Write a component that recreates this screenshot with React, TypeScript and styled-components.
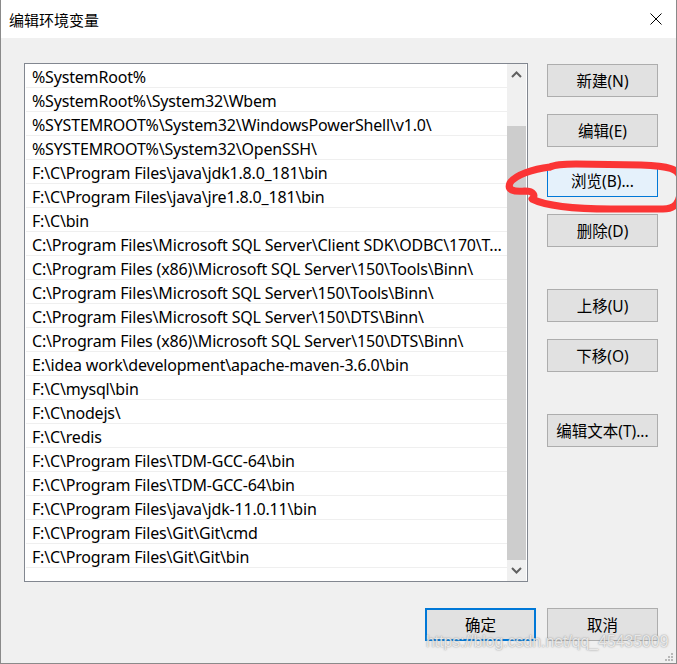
import React from "react";
import styled, { createGlobalStyle } from "styled-components";

const Global = createGlobalStyle`
  html, body { margin: 0; padding: 0; background: #f0f0f0; }
  * { box-sizing: border-box; }
  body { font-family: "Noto Sans", "Noto Sans CJK SC", sans-serif; }
`;

const Window = styled.div`
  position: relative;
  width: 677px;
  height: 664px;
  background: #f0f0f0;
  border: 1px solid #8a8a8a;
  border-top: none;
  display: flex;
  flex-direction: column;
  overflow: hidden;
`;

const TitleBar = styled.div`
  height: 38px;
  background: #ffffff;
  display: flex;
  align-items: center;
  justify-content: space-between;
  padding: 0 14px 0 8px;
  flex-shrink: 0;
`;

const Title = styled.div`
  font-family: "Noto Sans CJK SC", sans-serif;
  font-size: 15px;
  color: #000;
  line-height: 1;
  margin-top: 1px;
`;

const Body = styled.div`
  flex: 1;
  display: flex;
  flex-direction: column;
  padding: 25px 18px 0 23px;
`;

const Main = styled.div`
  display: flex;
  gap: 19px;
`;

const ListBox = styled.div`
  width: 504px;
  height: 519px;
  border: 1px solid #828790;
  background: #ffffff;
  display: flex;
  padding-right: 1px;
`;

const Rows = styled.div`
  flex: 1;
  display: flex;
  flex-direction: column;
  overflow: hidden;
`;

const Row = styled.div`
  height: 24px;
  flex-shrink: 0;
  border-bottom: 1px solid #efefef;
  margin-left: 1px;
  padding-left: 6px;
  padding-top: 2px;
  display: flex;
  align-items: center;
  font-size: 16px;
  color: #000;
  white-space: nowrap;
  overflow: hidden;
  letter-spacing: -0.18px;
`;

const ScrollBar = styled.div`
  width: 19px;
  background: #f0f0f0;
  display: flex;
  flex-direction: column;
`;

const ArrowBtn = styled.div`
  height: 21px;
  display: flex;
  align-items: center;
  justify-content: center;
  flex-shrink: 0;
`;

const Track = styled.div`
  flex: 1;
  display: flex;
  flex-direction: column;
  padding-top: 41px;
`;

const Thumb = styled.div`
  flex: 1;
  background: #cdcdcd;
`;

const ButtonColumn = styled.div`
  width: 111px;
  margin-top: 1px;
  display: flex;
  flex-direction: column;
`;

const Btn = styled.div<{ $focused?: boolean; $default?: boolean; $gap?: number }>`
  width: 111px;
  height: 33px;
  margin-top: ${(p) => p.$gap ?? 0}px;
  background: ${(p) => (p.$focused ? "#e5f1fb" : "#e1e1e1")};
  border: ${(p) =>
    p.$default ? "2px solid #0078d7" : p.$focused ? "1px solid #0078d7" : "1px solid #adadad"};
  display: flex;
  align-items: center;
  justify-content: center;
  font-size: 15.5px;
  color: #000;
  font-family: "Noto Sans", "Noto Sans CJK SC", sans-serif;
  white-space: nowrap;
`;

const Footer = styled.div`
  display: flex;
  justify-content: flex-end;
  gap: 11px;
  margin-top: 26px;
`;

const Watermark = styled.div`
  position: absolute;
  left: 425px;
  top: 633px;
  font-family: "Liberation Sans", Arial, sans-serif;
  font-size: 15.8px;
  color: rgba(255, 255, 255, 0.75);
  text-shadow: 0 0 2px rgba(120, 120, 120, 0.55), 0 0 1px rgba(120, 120, 120, 0.5);
  white-space: nowrap;
  pointer-events: none;
`;

const Overlay = styled.svg`
  position: absolute;
  left: 0;
  top: 0;
  pointer-events: none;
`;

const Grip = styled.svg`
  position: absolute;
  right: 2px;
  bottom: 0px;
`;

const paths = [
  "%SystemRoot%",
  "%SystemRoot%\\System32\\Wbem",
  "%SYSTEMROOT%\\System32\\WindowsPowerShell\\v1.0\\",
  "%SYSTEMROOT%\\System32\\OpenSSH\\",
  "F:\\C\\Program Files\\java\\jdk1.8.0_181\\bin",
  "F:\\C\\Program Files\\java\\jre1.8.0_181\\bin",
  "F:\\C\\bin",
  "C:\\Program Files\\Microsoft SQL Server\\Client SDK\\ODBC\\170\\T...",
  "C:\\Program Files (x86)\\Microsoft SQL Server\\150\\Tools\\Binn\\",
  "C:\\Program Files\\Microsoft SQL Server\\150\\Tools\\Binn\\",
  "C:\\Program Files\\Microsoft SQL Server\\150\\DTS\\Binn\\",
  "C:\\Program Files (x86)\\Microsoft SQL Server\\150\\DTS\\Binn\\",
  "E:\\idea work\\development\\apache-maven-3.6.0\\bin",
  "F:\\C\\mysql\\bin",
  "F:\\C\\nodejs\\",
  "F:\\C\\redis",
  "F:\\C\\Program Files\\TDM-GCC-64\\bin",
  "F:\\C\\Program Files\\TDM-GCC-64\\bin",
  "F:\\C\\Program Files\\java\\jdk-11.0.11\\bin",
  "F:\\C\\Program Files\\Git\\Git\\cmd",
  "F:\\C\\Program Files\\Git\\Git\\bin",
];

export default function App() {
  return (
    <>
      <Global />
      <Window>
        <TitleBar>
          <Title>编辑环境变量</Title>
          <svg width="12" height="12" viewBox="0 0 12 12">
            <path d="M0.5 0.5 L11.5 11.5 M11.5 0.5 L0.5 11.5" stroke="#000" strokeWidth="1" />
          </svg>
        </TitleBar>
        <Body>
          <Main>
            <ListBox>
              <Rows>
                {paths.map((p, i) => (
                  <Row key={i}>{p}</Row>
                ))}
              </Rows>
              <ScrollBar>
                <ArrowBtn>
                  <svg width="11" height="7" viewBox="0 0 11 7">
                    <path d="M1 6 L5.5 1.5 L10 6" stroke="#606060" strokeWidth="2" fill="none" />
                  </svg>
                </ArrowBtn>
                <Track>
                  <Thumb />
                </Track>
                <ArrowBtn>
                  <svg width="11" height="7" viewBox="0 0 11 7">
                    <path d="M1 1 L5.5 5.5 L10 1" stroke="#606060" strokeWidth="2" fill="none" />
                  </svg>
                </ArrowBtn>
              </ScrollBar>
            </ListBox>
            <ButtonColumn>
              <Btn>新建(N)</Btn>
              <Btn $gap={17}>编辑(E)</Btn>
              <Btn $gap={17} $focused>浏览(B)...</Btn>
              <Btn $gap={17}>删除(D)</Btn>
              <Btn $gap={42}>上移(U)</Btn>
              <Btn $gap={17}>下移(O)</Btn>
              <Btn $gap={42}>编辑文本(T)...</Btn>
            </ButtonColumn>
          </Main>
          <Footer>
            <Btn $default>确定</Btn>
            <Btn>取消</Btn>
          </Footer>
        </Body>
        <Watermark>https://blog.csdn.net/qq_45435009</Watermark>
        <Grip width="12" height="10" viewBox="0 0 12 10">
          <rect x="9" y="0" width="2" height="2" fill="#b8b8b8" />
          <rect x="6" y="3" width="2" height="2" fill="#b8b8b8" />
          <rect x="9" y="3" width="2" height="2" fill="#b8b8b8" />
          <rect x="3" y="6" width="2" height="2" fill="#b8b8b8" />
          <rect x="6" y="6" width="2" height="2" fill="#b8b8b8" />
          <rect x="9" y="6" width="2" height="2" fill="#b8b8b8" />
        </Grip>
        <Overlay width="677" height="664" viewBox="0 0 677 664">
          <path
            d="M549 167 C 532 169, 514 175, 509 183 C 506 190, 512 192, 524 191 C 533 191, 535 196, 531 199 C 545 206, 572 209, 610 209 L 662 209 C 674 209, 679 203, 679 190 L 679 178 C 678 169, 668 166, 640 165 L 575 164 C 560 164, 553 165, 549 167"
            stroke="#fb3535"
            strokeWidth="7"
            fill="none"
            strokeLinecap="round"
            strokeLinejoin="round"
          />
        </Overlay>
      </Window>
    </>
  );
}
